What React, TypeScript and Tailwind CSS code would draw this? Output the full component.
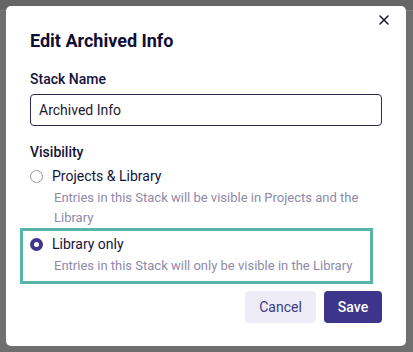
import React, { useState } from 'react';
import { X } from 'lucide-react';

const options = [
  { id: 'both', label: 'Projects & Library', desc: 'Entries in this Stack will be visible in Projects and the Library' },
  { id: 'library', label: 'Library only', desc: 'Entries in this Stack will only be visible in the Library' },
];

export default function App() {
  const [name, setName] = useState('Archived Info');
  const [visibility, setVisibility] = useState('library');

  return (
    <div
      className="w-[413px] h-[352px] p-[6px] bg-[linear-gradient(to_bottom,#666666_0,#666666_10px,#7b7b7b_10px,#7b7b7b_11px,#6f6f6f_11px)]"
      style={{ fontFamily: 'Roboto, "Liberation Sans", sans-serif' }}
    >
      <div className="w-[400px] h-[340px] bg-white rounded-[5px] flex flex-col px-[24px] pt-[6px]">
        <div className="shrink-0 flex justify-end -mr-[10px]">
          <button className="w-[16px] h-[16px] flex items-center justify-center text-[#1c1a3a]">
            <X className="w-[16px] h-[16px]" strokeWidth={2.4} />
          </button>
        </div>

        <h2 className="shrink-0 text-[18px] leading-[22px] font-bold text-[#100e33] mt-[2px]">Edit Archived Info</h2>

        <label className="shrink-0 text-[14px] leading-[18px] font-medium text-[#14123a] mt-[18px]">Stack Name</label>
        <input
          value={name}
          onChange={(e) => setName(e.target.value)}
          className="shrink-0 mt-[6px] h-[32px] w-full border border-[#2e2a4f] rounded-[4px] px-[8px] text-[14px] text-[#1b1a2c] outline-none"
        />

        <div className="shrink-0 text-[14px] leading-[18px] font-medium text-[#14123a] mt-[17px]">Visibility</div>

        <div className="shrink-0 mt-[6px] flex flex-col -ml-[10px]">
          {options.map((opt) => {
            const active = visibility === opt.id;
            return (
              <button
                key={opt.id}
                onClick={() => setVisibility(opt.id)}
                className={
                  active
                    ? 'w-[353px] flex items-start text-left border-[3px] border-[#55b5a7] pl-[7px] pr-[4px] pt-[4px] pb-[5px]'
                    : 'w-[363px] flex items-start text-left pl-[10px] pr-[4px]'
                }
              >
                <span
                  className={
                    active
                      ? 'mt-[3px] w-[13px] h-[13px] rounded-full bg-[#3d348b] flex items-center justify-center shrink-0'
                      : 'mt-[3px] w-[13px] h-[13px] rounded-full border border-[#9894aa] shrink-0'
                  }
                >
                  {active && <span className="w-[5px] h-[5px] rounded-full bg-white" />}
                </span>
                <span className="ml-[9px] flex flex-col">
                  <span className="text-[14px] leading-[18px] text-[#14123a]">{opt.label}</span>
                  <span className="mt-[3px] ml-[2px] text-[13px] leading-[20px] text-[#8e8aa8]">{opt.desc}</span>
                </span>
              </button>
            );
          })}
        </div>

        <div className="shrink-0 mt-[7px] flex justify-end gap-[8px]">
          <button className="h-[32px] w-[71px] rounded-[4px] bg-[#eeedf7] text-[14px] text-[#3d3a86]">Cancel</button>
          <button className="h-[32px] w-[58px] rounded-[4px] bg-[#3d348b] text-[14px] font-medium text-white">Save</button>
        </div>
      </div>
    </div>
  );
}
